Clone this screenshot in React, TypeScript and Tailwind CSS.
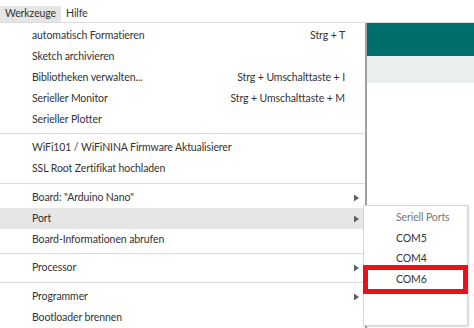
import React from 'react';

type Entry =
  | { kind: 'item'; label: string; shortcut?: string; sub?: boolean; active?: boolean }
  | { kind: 'sep' };

const entries: Entry[] = [
  { kind: 'item', label: 'automatisch Formatieren', shortcut: 'Strg + T' },
  { kind: 'item', label: 'Sketch archivieren' },
  { kind: 'item', label: 'Bibliotheken verwalten...', shortcut: 'Strg + Umschalttaste + I' },
  { kind: 'item', label: 'Serieller Monitor', shortcut: 'Strg + Umschalttaste + M' },
  { kind: 'item', label: 'Serieller Plotter' },
  { kind: 'sep' },
  { kind: 'item', label: 'WiFi101 / WiFiNINA Firmware Aktualisierer' },
  { kind: 'item', label: 'SSL Root Zertifikat hochladen' },
  { kind: 'sep' },
  { kind: 'item', label: 'Board: "Arduino Nano"', sub: true },
  { kind: 'item', label: 'Port', sub: true, active: true },
  { kind: 'item', label: 'Board-Informationen abrufen' },
  { kind: 'sep' },
  { kind: 'item', label: 'Processor', sub: true },
  { kind: 'sep' },
  { kind: 'item', label: 'Programmer', sub: true },
  { kind: 'item', label: 'Bootloader brennen' },
];

const Arrow = () => (
  <svg width="5" height="7" viewBox="0 0 5 7" className="absolute right-[6px] top-1/2 -translate-y-1/2">
    <path d="M0 0 L5 3.5 L0 7 Z" fill="#606060" />
  </svg>
);

export default function App() {
  return (
    <div
      className="relative w-[474px] h-[328px] overflow-hidden bg-white text-[#333] text-[10.5px] tracking-[-0.1px]"
      style={{ fontFamily: 'Lato, "Open Sans", sans-serif' }}
    >
      {/* menu bar */}
      <div className="flex h-[23px] items-end border-b border-[#dcdcdc]">
        <div className="flex h-[16px] items-center bg-[#e5e5e5] pl-[5px] pr-[5px]">Werkzeuge</div>
        <div className="flex h-[16px] items-center pl-[5px]">Hilfe</div>
      </div>

      <div className="flex">
        {/* dropdown */}
        <div className="w-[367px] h-[305px] border-r-2 border-[#a0a0a0] pt-[2px]">
          {entries.map((e, i) =>
            e.kind === 'sep' ? (
              <div key={i} className="h-[7.5px] flex items-center">
                <div className="h-px w-full bg-[#dadada]" />
              </div>
            ) : (
              <div
                key={i}
                className={`relative flex h-[21px] items-center pl-[32px] pr-[20px] ${e.active ? 'bg-[#e6e6e6]' : ''}`}
              >
                <span className="flex-1">{e.label}</span>
                {e.shortcut && <span>{e.shortcut}</span>}
                {e.sub && <Arrow />}
              </div>
            )
          )}
        </div>

        {/* editor behind */}
        <div className="flex-1 flex flex-col">
          <div className="h-[33px] bg-[#006e6c]" />
          <div className="h-[27px] bg-[#eceff0]" />
          <div className="flex-1 bg-white" />
        </div>
      </div>

      {/* port submenu */}
      <div className="absolute left-[363px] top-[205px] w-[105px] h-[121px] bg-white border border-[#d4d4d4] shadow-[1px_1px_2px_rgba(0,0,0,0.15)] pt-[2px]">
        <div className="flex h-[20px] items-center pl-[32px] text-[#777]">Seriell Ports</div>
        <div className="flex h-[21px] items-center pl-[32px]">COM5</div>
        <div className="flex h-[20px] items-center pl-[32px]">COM4</div>
        <div className="flex h-[21px] items-center pl-[32px]">COM6</div>
      </div>
      <div className="absolute left-[363px] top-[265px] w-[105px] h-[29px] border-[5px] border-[#e8121b]" />
    </div>
  );
}
